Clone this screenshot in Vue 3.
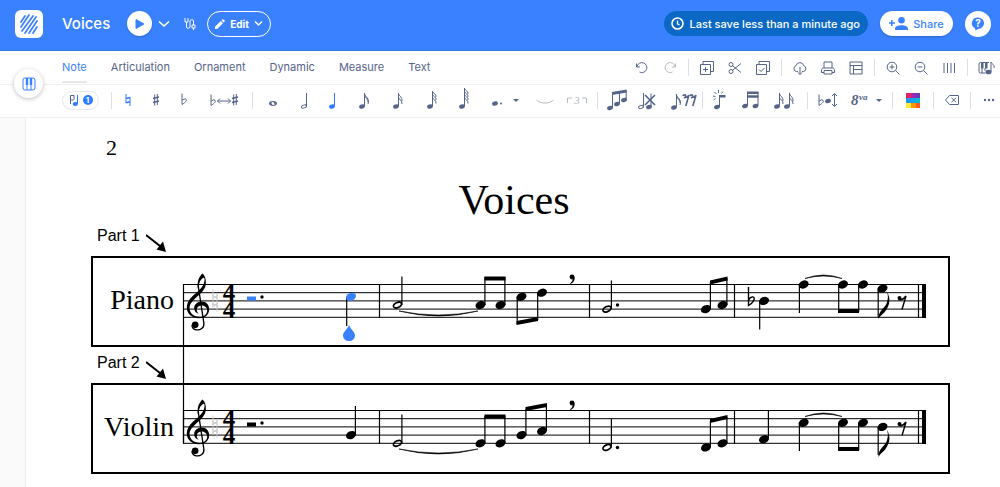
<template>
  <div class="editor">
    <svg class="sprite" width="0" height="0" aria-hidden="true">
      <defs>
        <ellipse id="hd" rx="3" ry="2.1" transform="rotate(-22)" fill="currentColor" />
        <path id="caret" d="M-3 -1H3L0 2Z" fill="currentColor" />
        <path id="rest8" d="M-3 -4a1.4 1.4 0 1 1 1 1.6C0 -2.3 2 -3 3 -5L-.2 6" class="ln thick" />

        <g id="undo" class="ln"><path d="M-5.5 -4.5V-1H-2" /><path d="M-5 -1.5A5 5 0 1 1 -2.5 4" /></g>
        <g id="redo" class="ln"><path d="M5.5 -4.5V-1H2" /><path d="M5 -1.5A5 5 0 1 0 2.5 4" /></g>
        <g id="duplicate" class="ln"><path d="M-6.5 -3.5H3.5V6.5H-6.5ZM-4 -3.5V-6.5H6.5V3.5H3.5M-1.5 -1V4M-4 1.5H1" /></g>
        <g id="cut" class="ln"><circle cx="-4" cy="-3.5" r="2" /><circle cx="-4" cy="3.5" r="2" /><path d="M-2.5 -2.3L6 4.5M-2.5 2.3L6 -4.5" /></g>
        <g id="select" class="ln"><path d="M-6.5 -3.5H3.5V6.5H-6.5ZM-4 -3.5V-6.5H6.5V3.5H3.5M-4 1.5L-2 3.5L1.5 0" /></g>
        <g id="cloud" class="ln"><path d="M-2 3.5H-3.5A3 3 0 0 1 -4 -2.3A4 4 0 0 1 3.8 -2.3A3 3 0 0 1 3.5 3.5H2M0 -1V6.5M-2 4.5L0 6.5L2 4.5" /></g>
        <g id="print" class="ln"><path d="M-4 0V-6H4V0M-4 4.5H-6.5V2C-6.5 1 -5.5 0 -4.5 0H4.5C5.5 0 6.5 1 6.5 2V4.5H4M-4 2.5H4V6H-4Z" /></g>
        <g id="layout" class="ln"><path d="M-6 -6H6V6H-6ZM-6 -2.5H6M-2.5 -2.5V6M-2.5 1.5H6" /></g>
        <g id="zoomin" class="ln"><circle cx="-1" cy="-1" r="4.8" /><path d="M2.5 2.5L6.5 6.5M-3.5 -1H1.5M-1 -3.5V1.5" /></g>
        <g id="zoomout" class="ln"><circle cx="-1" cy="-1" r="4.8" /><path d="M2.5 2.5L6.5 6.5M-3.5 -1H1.5" /></g>
        <path id="bars" class="ln" d="M-5 -5V5M-1.5 -5V5M2 -5V5M5.5 -5V5" />
        <g id="pianonote">
          <path class="ln" d="M-.5 5H-5.5Q-7 5 -7 3.5V-4Q-7 -5.5 -5.5 -5.5H3M-4 0V5M-1 0V3" />
          <path fill="currentColor" d="M-5 -5.5h2.5v6h-2.5zM-1 -5.5h2.5v6h-2.5z" />
          <path class="ln" d="M5 4V-6C5.5 -4 9 -3.5 8 0" /><ellipse cx="2.5" cy="4" rx="3" ry="2.3" fill="currentColor" />
        </g>

        <g id="natural" class="ln"><path d="M-2 -6V3M2 -3V6" /><path class="thick" d="M-2 -1.5L2 -2.5M-2 2.7L2 1.7" /></g>
        <g id="sharp" class="ln"><path d="M-1.3 -5.5V5.5M1.3 -6V5" /><path class="thick" d="M-3 -1.5L3 -3M-3 2.5L3 1" /></g>
        <g id="flat" class="ln"><path d="M-2 -6.5V4.5C2 2 3 .5 2 -.8C1 -1.5 -1 -.8 -2 .5" /></g>
        <g id="flatsharp">
          <use href="#flat" x="-11" y="1" /><use href="#sharp" x="11" />
          <path class="ln" d="M-6.5 1H6.5M-4 -1.5L-6.5 1L-4 3.5M4 -1.5L6.5 1L4 3.5" />
        </g>
        <g id="whole"><path fill="currentColor" fill-rule="evenodd" d="M-4 3.5C-4 .3 4 .3 4 3.5S-4 6.7 -4 3.5ZM-1.6 2.8C-1.4 5.2 1.4 5.8 1.6 4.2C1.4 1.8 -1.4 1.2 -1.6 2.8Z" /></g>
        <g id="half"><ellipse cx="-1" cy="6.5" rx="2.6" ry="1.5" class="ln" transform="rotate(-22 -1 6.5)" /><path class="ln" d="M1.5 -7V6" /></g>
        <g id="quarter"><use href="#hd" x="-1" y="6.5" /><path class="ln" d="M1.5 -7V6" /></g>
        <g id="eighth"><use href="#quarter" /><path class="ln" d="M1.5 -6C2 -3 7 -2 5 4M1.5 -5C2 -2 5.5 -1 5 2" /></g>
        <g id="sixteenth"><use href="#quarter" /><path class="ln" d="M1.5 -6C2 -4 5.5 -3 5 1M1.5 -2.5C2 -.5 5.5 .5 5 4" /></g>
        <g id="thirtysecond"><use href="#quarter" /><path class="ln" d="M1.5 -9V0M1.5 -8.5C2 -6.5 5.5 -6 5 -3M1.5 -5.5C2 -3.5 5.5 -3 5 0M1.5 -2.5C2 -.5 5.5 0 5 3.5" /></g>
        <g id="sixtyfourth"><use href="#quarter" /><path class="ln" d="M1.5 -12V0M1.5 -11.5C2 -9.5 5.5 -9 5 -6M1.5 -8.5C2 -6.5 5.5 -6 5 -3M1.5 -5.5C2 -3.5 5.5 -3 5 0M1.5 -2.5C2 -.5 5.5 0 5 3.5" /></g>
        <g id="dotted"><use href="#hd" x="-10" y="3.5" /><circle cx="-4" cy="3.5" r="1" fill="currentColor" /><use href="#caret" x="11" /></g>
        <path id="tie" class="ln" d="M-8.500 0C-5 4 5 4 8.5 0" />
        <g id="triplet"><path class="ln" d="M-9.5 3V-2H-5M5 -2H9.5V3" /><text x="0" y="4" text-anchor="middle" class="glyph small">3</text></g>
        <g id="beam3">
          <use href="#hd" x="-6" y="8" /><use href="#hd" x="1" y="4" /><use href="#hd" x="8" y="0" />
          <path class="ln" d="M-3.5 7.5V-7M3.5 3.5V-8M10.2 -.5V-9" /><path fill="currentColor" d="M-4 -8L10.7 -10.5V-7.5L-4 -5Z" />
        </g>
        <g id="replace">
          <ellipse cx="-7" cy="7" rx="2.5" ry="1.5" class="ln" transform="rotate(-22 -7 7)" /><path class="ln" d="M-4.500 -7V6.500M3 -6.500V6" />
          <use href="#hd" x="1" y="7" /><path class="ln thick" d="M-3 -5L7 5M7 -5L-3 5" />
        </g>
        <g id="fillrests"><use href="#eighth" x="-7" y="1" /><use href="#rest8" x="4" /><use href="#rest8" x="11" /></g>
        <g id="strum">
          <use href="#hd" x="-2" y="7" /><path class="ln" d="M.5 7V-3M-6 -4L-3.5 -3.5M-4.5 -8L-2.5 -6M-.5 -10V-7M4 -8.5L2.5 -6.5M-5.5 0L-3.5 -1.5" />
          <path fill="currentColor" d="M0 -5H6.5V-2.5H0Z" />
        </g>
        <g id="beam16">
          <use href="#hd" x="-6" y="6" /><use href="#hd" x="4.5" y="6" /><path class="ln" d="M-3.5 5.5V-8M7 5.5V-8" />
          <path fill="currentColor" d="M-4 -8.5H7.5V-6H-4ZM-4 -4.8H7.5V-2.3H-4Z" />
        </g>
        <g id="twin16"><use href="#sixteenth" x="-9" /><use href="#sixteenth" x="1" /></g>
        <g id="transpose">
          <use href="#flat" x="-7" y="1" /><use href="#hd" x="0" y="1" />
          <path class="ln" d="M6.5 -6V6M4 -4L6.5 -6.5L9 -4M4 4L6.5 6.5L9 4" />
        </g>
        <g id="octave"><text x="-17" y="5" class="glyph">8</text><text x="-9" y="0" class="glyph tiny">va</text><use href="#caret" x="11" /></g>
        <g id="colors" shape-rendering="crispEdges">
          <path fill="#e91e63" d="M-7 -7h5v5h-5z" /><path fill="#9c27b0" d="M-2 -7h5v5h-5z" /><path fill="#673ab7" d="M3 -7h4v5h-4z" />
          <path fill="#2196f3" d="M-7 -2h5v5h-5z" /><path fill="#12a5f0" d="M-2 -2h5v5h-5z" /><path fill="#00bcd4" d="M3 -2h4v5h-4z" />
          <path fill="#ffeb3b" d="M-7 3h5v5h-5z" /><path fill="#ff9800" d="M-2 3h5v5h-5z" /><path fill="#ff5722" d="M3 3h4v5h-4z" />
        </g>
        <path id="erase" class="ln" d="M-2.5 -4.5H6.5V4.5H-2.5L-6.5 0ZM-.5 -2.3L4 2.3M4 -2.3L-.5 2.3" />
        <g id="more" fill="currentColor"><circle cx="-2" r="1.2" /><circle cx="2" r="1.2" /><circle cx="6" r="1.2" /></g>

        <g id="clef" transform="scale(.3333)">
          <path d="M57 0C48 8 40 22 43 44L47 42C45 30 50 18 60 13C64 12 64 20 62 27C59 40 45 52 35 61C20 74 10 86 10 103C10 122 26 134 46 134C66 134 77 122 77 107C77 94 68 84 55 84C41 84 32 93 32 104C32 112 37 118 46 121C41 116 39 112 40 107C41 100 47 96 55 96C64 96 71 103 71 111C71 123 60 130 47 130C30 130 18 118 18 103C18 92 26 83 38 72C52 60 66 48 67 30C68 16 64 6 57 0Z" />
          <path d="M44 36L61 148C63 164 50 171 38 169C30 168 26 162 25 155" fill="none" stroke="#000" stroke-width="4" />
          <circle cx="35" cy="154" r="10" />
        </g>
      </defs>
    </svg>

    <header class="topbar">
      <a class="logo" href="#" aria-label="Home">
        <svg width="20" height="20" viewBox="0 0 20 20">
          <path d="M2 8L6 2M2 13L10 1M3 17L14 2M6 19L17 3M10 19L18 7M14 19L18 13" />
        </svg>
      </a>
      <h1 class="song">Voices</h1>
      <button class="play" aria-label="Play">
        <svg width="10" height="12" viewBox="0 0 10 12"><path d="M1 1.5L9 6L1 10.5Z" /></svg>
      </button>
      <button class="plain" aria-label="Playback options">
        <svg width="12" height="8" viewBox="0 0 12 8"><path d="M1 1.5L6 6L11 1.5" stroke-width="1.6" /></svg>
      </button>
      <button class="plain midi" aria-label="MIDI devices">
        <svg width="12" height="14" viewBox="0 0 12 14">
          <path d="M1 2V5H4V2M2.5 5V10A1.8 1.8 0 0 0 6 10V4A1.8 1.8 0 0 1 9.5 4V8M8 8H11V11H8ZM1 1V2M4 1V2M9.5 11V13" />
        </svg>
      </button>
      <button class="edit">
        <svg width="10" height="10" viewBox="0 0 10 10"><path class="solid" d="M0 10V7.8L5.8 2L8 4.2L2.2 10ZM6.5 1.3L7.5 .3Q8 0 8.4 .4L9.6 1.6Q10 2 9.7 2.5L8.7 3.5Z" /></svg>
        Edit
        <svg width="9" height="7" viewBox="0 0 9 7"><path d="M1 1.5L4.5 5L8 1.5" stroke-width="1.5" /></svg>
      </button>
      <p class="saved">
        <svg width="13" height="13" viewBox="0 0 13 13"><circle cx="6.5" cy="6.5" r="5.5" stroke-width="1.6" /><path d="M6.5 3.5V6.8L8.5 8" stroke-width="1.3" /></svg>
        Last save less than a minute ago
      </p>
      <button class="share">
        <svg width="19" height="13" viewBox="0 0 19 13"><circle cx="12.5" cy="3.3" r="3.3" /><path d="M6 13V11.5C6 7 19 7 19 11.5V13ZM2 3H3.6V5.2H6V6.8H3.6V9H2V6.8H0V5.2H2Z" /></svg>
        Share
      </button>
      <button class="help" aria-label="Help">
        <svg width="14" height="14" viewBox="0 0 14 14"><path d="M7 .5A6 5.7 0 0 1 7 12L4.5 13.5L4 11.2A6 5.7 0 0 1 7 .5Z" /><text x="7" y="9.5" text-anchor="middle">?</text></svg>
      </button>
    </header>

    <nav class="tabs">
      <a v-for="tab in tabs" :key="tab" href="#" :class="['tab', { active: tab === activeTab }]" @click.prevent="activeTab = tab">{{ tab }}</a>
      <div class="actions">
        <template v-for="(group, g) in actions" :key="g">
          <span v-if="g" class="divider wide"></span>
          <button v-for="id in group" :key="id" :class="['tool', { disabled: id === 'redo' }]" :aria-label="id">
            <svg width="28" height="28" viewBox="-14 -14 28 28"><use :href="'#' + id" /></svg>
          </button>
        </template>
      </div>
    </nav>

    <button class="keyboard" aria-label="Show piano keyboard">
      <svg width="14" height="14" viewBox="0 0 14 14">
        <rect x="1" y="1" width="12" height="12" rx="2" /><path d="M5 8V13M9 8V13" /><path class="keys" d="M3.8 1h2.4v7h-2.4zM7.8 1h2.4v7h-2.4z" />
      </svg>
    </button>

    <div class="tools">
      <button class="voice" aria-label="Voice 1">
        <svg width="10" height="14" viewBox="0 0 10 14">
          <path class="ln" d="M1.5 11V2.5H5V5A2 1.4 0 1 1 1.5 5" /><path class="stem" d="M8.5 2V11" /><ellipse class="head" cx="6.3" cy="11" rx="2.6" ry="2" />
        </svg>
        <span class="number">1</span>
      </button>
      <template v-for="(group, g) in tools" :key="g">
        <span class="divider"></span>
        <button
          v-for="tool in group"
          :key="tool.id"
          :class="['tool', tool.state]"
          :aria-label="tool.id"
        >
          <svg :width="tool.w" height="28" :viewBox="`${-tool.w / 2} -14 ${tool.w} 28`"><use :href="'#' + tool.id" /></svg>
        </button>
      </template>
    </div>

    <main class="canvas">
      <article class="sheet">
        <p class="page-number">2</p>
        <h2 class="title">Voices</h2>

        <section v-for="part in parts" :key="part.name" class="part">
          <div class="part-label">
            <span>{{ part.label }}</span>
            <svg width="22" height="18" viewBox="0 0 22 18"><path d="M0 1L14 12" stroke="#000" stroke-width="2" /><path d="M20 18L10.5 15.5L17 7.5Z" /></svg>
          </div>
          <div class="staff-box">
            <h3 class="instrument">{{ part.name }}</h3>
            <svg class="staff" viewBox="183 0 743 87" role="img" :aria-label="part.name + ' staff'">
              <path v-for="n in 5" :key="n" class="line" :d="`M183 ${pos(part, (n - 1) * 2)}H926`" />
              <path class="bar" :d="`M183.5 ${part.top}V${part.connectTo}`" />
              <path v-for="x in [379.5, 589.5, 734.5, 918.5]" :key="x" class="bar" :d="`M${x} ${part.top}v33`" />
              <rect x="922" :y="part.top - .5" width="4" height="34" />
              <g :transform="`translate(183.5 ${part.top - 11})`"><use href="#clef" /></g>
              <path class="ghost" :d="`M213 ${part.top + 5}v19M217 ${part.top + 9}v18M212 ${part.top + 11}l6 3m0 -3l-6 3m0 5l6 3m0 -3l-6 3`" />
              <text class="meter" text-anchor="middle">
                <tspan x="229" :y="part.top + 16.5">4</tspan>
                <tspan x="229" :y="part.top + 33">4</tspan>
              </text>

              <rect :class="{ picked: part.picked }" x="247" :y="part.top + 12" width="9" height="4" />
              <circle cx="262" :cy="part.top + 12.5" r="1.7" />

              <g v-for="note in part.notes" :key="note.x">
                <path v-if="note.tip" class="stem" :d="`M${stemX(note)} ${pos(part, note.step)}V${note.tip}`" />
                <g :transform="`translate(${note.x} ${pos(part, note.step)}) rotate(-24)`">
                  <ellipse v-if="note.half" class="open" rx="4.3" ry="2.5" />
                  <ellipse v-else :class="{ picked: note.picked }" rx="5.2" ry="3.9" />
                </g>
                <circle v-if="note.dot" cx="617.5" :cy="note.dot" r="1.7" />
                <path v-if="note.flag" :d="`M878.5 ${note.tip}c1 -8 8 -9 9 -17c1 -4 0 -6 -1 -9c5 8 3 14 -1 20c-2 3 -5 4 -7 8Z`" />
              </g>
              <path v-for="b in part.beams" :key="b[0]" :d="`M${b[0] - .5} ${b[1]}L${b[2] + .5} ${b[3]}v4L${b[0] - .5} ${b[1] + 4}Z`" />

              <path :d="`M399 ${part.slur}q39.5 10 79 0q-39.5 8 -79 0Z`" class="slur" />
              <path :d="`M805 ${part.arc}q18.5 -7 37 0q-18.5 -5 -37 0Z`" class="slur" />
              <g :transform="`translate(572 ${part.breath})`">
                <circle r="2.4" /><path d="M2.4 -.5C3.4 3 1.5 5.5 -1.5 7L-2 6.3C.2 4.8 .8 3.5 .5 1.5Z" />
              </g>
              <path v-if="part.flat" class="flat" d="M748.5 29V47.5C756 43 755 38 752 39C750 39.5 749 41 748.5 42.5" />
              <g :transform="`translate(902 ${part.rest})`">
                <circle cx="-2.5" cy="-4" r="2" /><path class="rest" d="M-3.5 -2.5C0 -1.5 2 -3 4 -6L0 7.5" />
              </g>
              <path v-if="part.picked" class="picked" d="M349 67C351 72 355 74 355 77.5A6 5.5 0 0 1 343 77.5C343 74 347 72 349 67Z" />
            </svg>
          </div>
        </section>
      </article>
    </main>
  </div>
</template>

<script setup>
import { ref } from 'vue'

const tabs = ['Note', 'Articulation', 'Ornament', 'Dynamic', 'Measure', 'Text']
const activeTab = ref('Note')

const actions = [
  ['undo', 'redo'],
  ['duplicate', 'cut', 'select'],
  ['cloud', 'print', 'layout'],
  ['zoomin', 'zoomout', 'bars'],
  ['pianonote']
]

const tools = [
  [
    { id: 'natural', w: 28, state: 'active' },
    { id: 'sharp', w: 28 },
    { id: 'flat', w: 28 },
    { id: 'flatsharp', w: 52 }
  ],
  [
    { id: 'whole', w: 36 },
    { id: 'half', w: 28 },
    { id: 'quarter', w: 28, state: 'active' },
    { id: 'eighth', w: 32 },
    { id: 'sixteenth', w: 36 },
    { id: 'thirtysecond', w: 32 },
    { id: 'sixtyfourth', w: 32 },
    { id: 'dotted', w: 52 },
    { id: 'tie', w: 28, state: 'disabled' },
    { id: 'triplet', w: 36, state: 'disabled' }
  ],
  [
    { id: 'beam3', w: 32 },
    { id: 'replace', w: 32 },
    { id: 'fillrests', w: 36 }
  ],
  [
    { id: 'strum', w: 28 },
    { id: 'beam16', w: 36 },
    { id: 'twin16', w: 36 }
  ],
  [
    { id: 'transpose', w: 36 },
    { id: 'octave', w: 44 }
  ],
  [{ id: 'colors', w: 36 }],
  [{ id: 'erase', w: 32 }],
  [{ id: 'more', w: 28 }]
]

// step counts half spaces down from the top staff line, tip is the free end of the stem
const parts = [
  {
    label: 'Part 1',
    name: 'Piano',
    top: 26.5,
    connectTo: 185,
    picked: true,
    slur: 53,
    arc: 20.5,
    breath: 19,
    rest: 44,
    flat: true,
    notes: [
      { x: 351, step: 3, tip: 68, picked: true },
      { x: 397.5, step: 5, tip: 18.5, half: true },
      { x: 480.5, step: 5, tip: 19 },
      { x: 500.5, step: 5, tip: 19 },
      { x: 521.5, step: 3, tip: 66 },
      { x: 542, step: 2, tip: 62 },
      { x: 607, step: 6, tip: 22.5, half: true, dot: 47 },
      { x: 706, step: 6, tip: 24 },
      { x: 722.5, step: 5, tip: 20 },
      { x: 764, step: 4, tip: 71.5 },
      { x: 803.7, step: 0, tip: 55 },
      { x: 843, step: 0, tip: 54 },
      { x: 863, step: 0, tip: 54 },
      { x: 882.5, step: 1, tip: 59, flag: true }
    ],
    beams: [
      [485, 18.5, 505, 18.5],
      [517, 63, 537.5, 59],
      [710.5, 22.5, 727, 18.5],
      [838.5, 51, 858.5, 51]
    ]
  },
  {
    label: 'Part 2',
    name: 'Violin',
    top: 25.5,
    connectTo: 58.5,
    slur: 64,
    arc: 31.5,
    breath: 18,
    rest: 43,
    notes: [
      { x: 351, step: 6, tip: 21 },
      { x: 397.5, step: 8, tip: 29.5, half: true },
      { x: 480.5, step: 8, tip: 31 },
      { x: 500.5, step: 8, tip: 31 },
      { x: 521.5, step: 6, tip: 24 },
      { x: 542, step: 5, tip: 20 },
      { x: 607, step: 9, tip: 34, half: true, dot: 62.5 },
      { x: 706, step: 9, tip: 36 },
      { x: 722.5, step: 8, tip: 32 },
      { x: 764, step: 7, tip: 26 },
      { x: 803.7, step: 3, tip: 66 },
      { x: 843, step: 3, tip: 65 },
      { x: 863, step: 3, tip: 65 },
      { x: 882.5, step: 4, tip: 70, flag: true }
    ],
    beams: [
      [485, 29.5, 505, 29.5],
      [526, 22, 546.5, 18],
      [710.5, 34, 727, 30],
      [838.5, 62, 858.5, 62]
    ]
  }
]

const pos = (part, step) => part.top + step * 4.1

const stemX = (note) => (note.tip > 45 ? note.x - 4.3 : note.x + 4.4)
</script>

<style>
body {
  background: #ffffff;
}
</style>

<style scoped>
.editor {
  position: relative;
  display: flex;
  flex-direction: column;
  min-height: 100vh;
  overflow: hidden;
  font-family: Inter, "Liberation Sans", sans-serif;
  color: #56648a;
}

.sprite {
  position: absolute;
}

h1,
h2,
h3,
p {
  margin: 0;
  font-weight: 400;
}

button {
  display: flex;
  align-items: center;
  justify-content: center;
  flex: none;
  margin: 0;
  padding: 0;
  border: 0;
  background: none;
  color: inherit;
  font-family: inherit;
  cursor: pointer;
}

.ln {
  fill: none;
  stroke: currentColor;
  stroke-width: 1;
}

.ln.thick,
.thick {
  stroke-width: 1.6;
}

.glyph {
  fill: currentColor;
  font: italic bold 15px "Liberation Serif", serif;
}

.glyph.small {
  font-size: 11px;
  font-weight: 400;
}

.glyph.tiny {
  font-size: 9px;
}

/* top bar */
.topbar {
  display: flex;
  align-items: center;
  box-sizing: border-box;
  height: 51px;
  padding: 0 9px 3px 15px;
  background: #3981ff;
  border-bottom: 1px solid #3475e8;
  color: #ffffff;
}

.topbar svg {
  fill: none;
  stroke: #ffffff;
}

.logo {
  display: flex;
  align-items: center;
  justify-content: center;
  width: 28px;
  height: 28px;
  margin-right: 19px;
  border-radius: 6px;
  background: #ffffff;
}

.topbar .logo svg {
  stroke: #3981ff;
  stroke-width: 1.7;
  stroke-linecap: round;
}

.song {
  width: 65px;
  font-size: 15px;
  font-weight: 500;
}

.play {
  width: 25px;
  height: 25px;
  margin-right: 6px;
  border-radius: 50%;
  background: #ffffff;
  box-shadow: 0 1px 2px rgba(0, 0, 0, 0.2);
}

.topbar .play svg {
  fill: #3981ff;
  stroke: #3981ff;
  stroke-linejoin: round;
}

.midi {
  margin: 0 11px 0 14px;
}

.edit {
  gap: 5px;
  width: 64px;
  height: 26px;
  border: 1px solid #ffffff;
  border-radius: 13px;
  font-size: 10px;
  font-weight: 700;
}

.topbar .edit .solid {
  fill: #ffffff;
  stroke: none;
}

.saved {
  display: flex;
  align-items: center;
  gap: 6px;
  height: 25px;
  margin-left: auto;
  padding: 0 8px 0 7px;
  border-radius: 13px;
  background: #0b68c4;
  font-size: 11px;
  font-weight: 500;
}

.share {
  gap: 5px;
  width: 73px;
  height: 25px;
  margin: 0 12px;
  border-radius: 13px;
  background: #ffffff;
  box-shadow: 0 1px 2px rgba(0, 0, 0, 0.2);
  color: #3981ff;
  font-size: 11px;
  font-weight: 500;
}

.topbar .share svg,
.topbar .help svg {
  fill: #3981ff;
  stroke: none;
}

.help {
  width: 26px;
  height: 26px;
  border-radius: 50%;
  background: #ffffff;
}

.topbar .help text {
  fill: #ffffff;
  font: bold 10px Inter, sans-serif;
}

/* tabs and actions */
.tabs {
  display: flex;
  box-sizing: border-box;
  height: 34px;
  padding-left: 62px;
  border-bottom: 1px solid #f0f1f3;
}

.tab {
  box-sizing: border-box;
  height: 32px;
  margin-right: 24px;
  border-bottom: 2px solid transparent;
  color: #56648a;
  font-size: 11px;
  line-height: 33px;
  text-decoration: none;
}

.tab.active {
  border-color: #e6e8ec;
  color: #3981ff;
}

.actions {
  display: flex;
  align-items: center;
  margin-left: auto;
}

.divider {
  flex: none;
  width: 1px;
  height: 17px;
  margin: 0 2px;
  background: #dcdfe5;
}

.divider.wide {
  margin: 0 4px;
}

.tool.active {
  color: #2f7bff;
}

.tool.disabled {
  color: #b6bbc6;
}

.keyboard {
  position: absolute;
  top: 69px;
  left: 14px;
  width: 29px;
  height: 29px;
  border-radius: 50%;
  background: #ffffff;
  box-shadow: 0 1px 4px rgba(0, 0, 0, 0.25);
}

.keyboard svg {
  fill: none;
  stroke: #3981ff;
}

.keyboard .keys {
  fill: #3981ff;
  stroke: none;
}

/* note tools */
.tools {
  display: flex;
  align-items: center;
  height: 30px;
  padding: 0 0 2px 62px;
  border-bottom: 1px solid #f0f1f3;
}

.voice {
  gap: 4px;
  box-sizing: border-box;
  width: 37px;
  height: 19px;
  margin-right: 10px;
  border: 1px solid #e6e8ec;
  border-radius: 10px;
}

.voice .stem {
  stroke: #2f7bff;
}

.voice .head {
  fill: #2f7bff;
}

.number {
  width: 10px;
  height: 10px;
  border-radius: 50%;
  background: #2f7bff;
  color: #ffffff;
  font-size: 8px;
  font-weight: 700;
  line-height: 10px;
}

/* score */
.canvas {
  display: flex;
  flex: 1;
  padding-left: 25px;
  background: #fafafa;
}

.sheet {
  flex: 1;
  padding: 18px 50px 13px 65px;
  border-left: 1px solid #ececec;
  background: #ffffff;
  color: #000000;
}

.page-number {
  padding-left: 15px;
  font: 22px/24px "Liberation Serif", serif;
}

.title {
  margin: 16px 0 3px;
  padding-right: 13px;
  font: 42px/48px "Liberation Serif", serif;
  text-align: center;
}

.part + .part {
  margin-top: 7px;
}

.part-label {
  display: flex;
  gap: 6px;
  height: 29px;
  padding-left: 6px;
  font: 16px/18px "Liberation Sans", Arial, sans-serif;
}

.part-label svg {
  margin-top: 7px;
}

.staff-box {
  display: flex;
  align-items: center;
  padding-right: 22px;
  border: 2px solid #000000;
}

.instrument {
  flex: none;
  width: 81px;
  margin: 0 9px 3px 0;
  font: 28px/30px "Liberation Serif", serif;
  text-align: right;
}

.staff {
  display: block;
  flex: 1;
  min-width: 0;
  overflow: visible;
}

.line {
  stroke: #000000;
  stroke-width: 1;
}

.bar,
.staff .stem {
  stroke: #000000;
  stroke-width: 1.2;
}

.ghost {
  fill: none;
  stroke: #c8c8c8;
}

.meter {
  font: bold 25px "Liberation Serif", serif;
}

.picked {
  fill: #3981ff;
}

.open {
  fill: none;
  stroke: #000000;
  stroke-width: 1.7;
}

.slur {
  stroke: #000000;
  stroke-width: 0.6;
}

.flat,
.rest {
  fill: none;
  stroke: #000000;
  stroke-width: 1.4;
}
</style>
